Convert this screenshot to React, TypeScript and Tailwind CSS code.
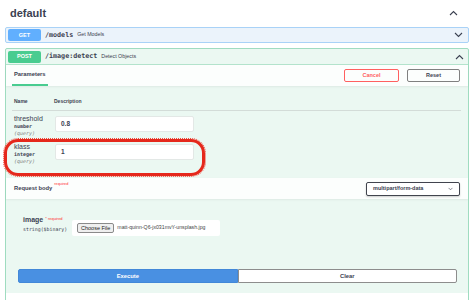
import React from "react";

const sans = { fontFamily: '"Liberation Sans", Arial, sans-serif' };
const mono = { fontFamily: '"DejaVu Sans Mono", monospace' };

function Chevron({ up, className }: { up?: boolean; className?: string }) {
  return (
    <svg width="9" height="6" viewBox="0 0 9 6" className={className}>
      <polyline
        points={up ? "1,5 4.5,1.5 8,5" : "1,1 4.5,4.5 8,1"}
        fill="none"
        stroke="#3b4151"
        strokeWidth="1.1"
      />
    </svg>
  );
}

function ParamRow({ name, type, value }: { name: string; type: string; value: string }) {
  return (
    <div className="flex">
      <div className="w-[43px] pl-[2px] flex flex-col">
        <div className="text-[7px] leading-[8px] text-[#3b4151]">{name}</div>
        <div className="text-[5px] leading-[7px] font-bold text-[#3b4151]" style={mono}>
          {type}
        </div>
        <div className="text-[5px] leading-[7px] italic text-[#808080]" style={mono}>
          (query)
        </div>
      </div>
      <div className="pt-[1px]">
        <div className="w-[139px] h-[16px] bg-white border border-[#e3e8e6] rounded-[2px] flex items-center pl-[5px] text-[6.5px] font-bold text-[#3b4151]">
          {value}
        </div>
      </div>
    </div>
  );
}

export default function App() {
  return (
    <div className="w-[474px] h-[300px] overflow-hidden bg-white relative" style={sans}>
      <div className="h-[26px] flex items-center justify-between pl-[10px] pr-[16px]">
        <span className="text-[11px] font-bold text-[#3b4151]">default</span>
        <Chevron up />
      </div>

      <div className="mx-[5px] mt-[1px] h-[16px] border border-[#a9d2f7] bg-[#ebf3fb] rounded-[2px] flex items-center pl-[2px] pr-[5px]">
        <div className="w-[33px] h-[12px] bg-[#61affe] rounded-[2px] flex items-center justify-center text-white text-[5.5px] font-bold">
          GET
        </div>
        <span className="ml-[4px] text-[6.7px] font-bold text-[#3b4151]" style={mono}>
          /models
        </span>
        <span className="ml-[4px] text-[5.3px] text-[#3b4151]">Get Models</span>
        <div className="flex-1" />
        <Chevron />
      </div>

      <div className="mx-[5px] mt-[5px] border border-[#9fdcc0] bg-[#ebf8f2] rounded-[2px] flex flex-col">
        <div className="h-[16px] flex items-center pl-[2px] pr-[4px] border-b border-[#b4e4cd]">
          <div className="w-[33px] h-[12px] bg-[#49cc90] rounded-[2px] flex items-center justify-center text-white text-[5.5px] font-bold">
            POST
          </div>
          <span className="ml-[4px] text-[6.7px] font-bold text-[#3b4151]" style={mono}>
            /image:detect
          </span>
          <span className="ml-[4px] text-[5.3px] text-[#3b4151]">Detect Objects</span>
          <div className="flex-1" />
          <Chevron up />
        </div>

        <div className="h-[21px] bg-[#fcfefd] shadow-[0_1px_2px_rgba(0,0,0,0.06)] flex items-center justify-between pl-[6px] pr-[8px]">
          <div className="h-[21px] flex flex-col justify-end">
            <div className="px-[2px] pb-[5px] text-[5.8px] font-bold text-[#3b4151]">Parameters</div>
            <div className="h-[2px] bg-[#49cc90]" />
          </div>
          <div className="flex gap-[8px]">
            <div className="w-[55px] h-[13px] border border-[#ff6060] rounded-[2px] flex items-center justify-center text-[5.5px] font-bold text-[#ff6060] bg-transparent">
              Cancel
            </div>
            <div className="w-[53px] h-[13px] border border-[#808080] rounded-[2px] flex items-center justify-center text-[5.5px] font-bold text-[#3b4151]">
              Reset
            </div>
          </div>
        </div>

        <div className="pl-[6px] pr-[7px] pt-[12px] pb-[13px]">
          <div className="flex pb-[5px] border-b border-[#d3dcd8] text-[5px] leading-[7px] font-bold text-[#3b4151]">
            <div className="w-[42px] pl-[2px]">Name</div>
            <div>Description</div>
          </div>
          <div className="pt-[4px] flex flex-col gap-[6px]">
            <ParamRow name="threshold" type="number" value="0.8" />
            <ParamRow name="klass" type="integer" value="1" />
          </div>
        </div>

        <div className="h-[21px] bg-[#fcfefd] shadow-[0_1px_2px_rgba(0,0,0,0.06)] flex items-center justify-between pl-[8px] pr-[8px]">
          <div className="flex items-start">
            <span className="text-[5.8px] font-bold text-[#3b4151]">Request body</span>
            <span className="ml-[2px] -mt-[2px] text-[3.8px] text-[#ff3030]">required</span>
          </div>
          <div className="w-[94px] h-[14px] border border-[#41444e] rounded-[2px] bg-white flex items-center justify-between pl-[6px] pr-[6px] shadow-[0_1px_2px_rgba(0,0,0,0.2)]">
            <span className="text-[5.5px] font-bold text-[#3b4151]">multipart/form-data</span>
            <Chevron className="w-[5px] h-[4px]" />
          </div>
        </div>

        <div className="pl-[17px] pt-[16px] flex">
          <div className="w-[49px] flex flex-col">
            <div className="flex items-start">
              <span className="text-[7px] leading-[9px] font-bold text-[#3b4151]">image</span>
              <span className="ml-[2px] mt-[1px] text-[4px] text-[#ff3030]">* required</span>
            </div>
            <div className="mt-[2px] text-[4.9px] leading-[7px] text-[#3b4151]" style={mono}>
              string($binary)
            </div>
          </div>
          <div className="pt-[5px]">
            <div className="w-[148px] h-[16px] bg-white rounded-[2px] flex items-center pl-[5px]">
              <div className="h-[10px] px-[3px] bg-[#efefef] border border-[#8a8a8a] rounded-[2px] flex items-center text-[5.5px] text-[#222]">
                Choose File
              </div>
              <span className="ml-[3px] text-[5.2px] text-[#444]">matt-quinn-Q6-jx031mvY-unsplash.jpg</span>
            </div>
          </div>
        </div>

        <div className="pl-[12px] pr-[11px] pt-[33px] pb-[10px] flex">
          <div className="flex-1 h-[14px] bg-[#4990e2] border border-[#4288d8] rounded-l-[2px] flex items-center justify-center text-white text-[5.8px] font-bold">
            Execute
          </div>
          <div className="flex-1 h-[14px] bg-white border border-[#8d8d8d] rounded-r-[2px] flex items-center justify-center text-[#3b4151] text-[5.8px] font-bold">
            Clear
          </div>
        </div>
        <div className="h-[20px] bg-white" />
      </div>

      <div className="absolute left-[4px] top-[139px] w-[201px] h-[37px] border-[3px] border-[#e5281c] rounded-[14px]" />
      <div className="absolute left-[3px] top-[138px] w-[203px] h-[39px] border border-dotted border-[#ee4b3e] rounded-[15px]" />
    </div>
  );
}
